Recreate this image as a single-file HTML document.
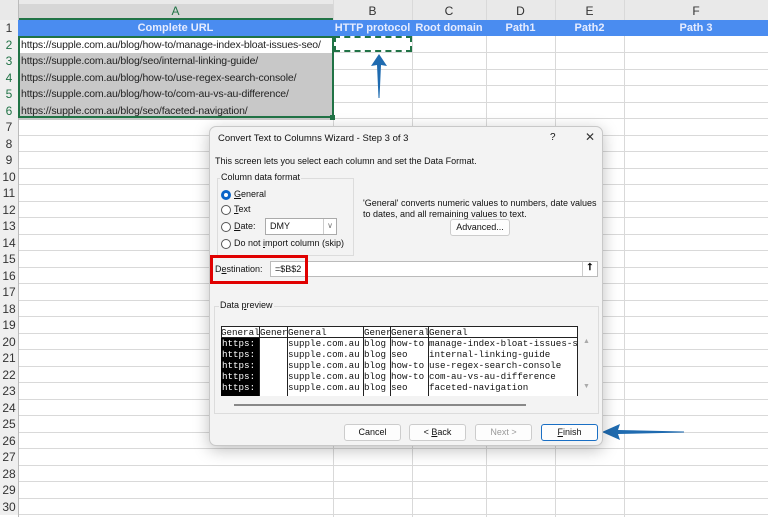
<!DOCTYPE html>
<html><head><style>
*{margin:0;padding:0;box-sizing:border-box}
body{width:768px;height:517px;overflow:hidden;background:#fff;font-family:"Liberation Sans",Arial,sans-serif;position:relative}
.a{position:absolute}
.hl{position:absolute;left:0;width:768px;height:1px;background:#d9d9d9}
.vl{position:absolute;top:0;height:517px;width:1px;background:#d9d9d9}
.rn{position:absolute;left:0;width:18px;text-align:center;font-size:12px;color:#333;height:16.5px;line-height:17px;background:#efefef}
.ch{position:absolute;top:4px;font-size:12px;color:#333;text-align:center}
.bh{position:absolute;top:20px;height:16px;line-height:16px;color:#e6ecff;font-weight:bold;font-size:11px;text-align:center;white-space:nowrap}
.url{position:absolute;left:19px;width:313px;font-size:10.5px;letter-spacing:-0.15px;color:#222;height:16.5px;line-height:17px;padding-left:2px;background:#c8c8c8;white-space:nowrap;overflow:hidden}
.dlg{position:absolute;left:209px;top:126px;width:394px;height:320px;background:#f3f3f3;border:1px solid #c8c8c8;border-radius:7px;box-shadow:0 4px 16px rgba(0,0,0,.25);font-size:9px;color:#111}
.btn{position:absolute;height:17px;background:#fdfdfd;border:1px solid #ccc;border-radius:3px;text-align:center;line-height:15px;font-size:9px}
.rad{position:absolute;width:10px;height:10px;border:1px solid #555;border-radius:50%;background:#fff}
.mono{font-family:"Liberation Mono",monospace;font-size:9.2px;position:absolute;line-height:11px;white-space:pre}
</style></head><body>
<div class="a" style="left:0;top:0;width:768px;height:20px;background:#e9e9e9"></div>
<div class="a" style="left:18px;top:4px;width:315px;height:16px;background:#d6d6d6;border-bottom:2px solid #217346"></div>
<div class="ch" style="left:18px;width:315px;color:#217346">A</div>
<div class="ch" style="left:333px;width:79px">B</div>
<div class="ch" style="left:412px;width:74px">C</div>
<div class="ch" style="left:486px;width:69px">D</div>
<div class="ch" style="left:555px;width:69px">E</div>
<div class="ch" style="left:624px;width:144px">F</div>
<div class="hl" style="top:52px"></div><div class="hl" style="top:69px"></div><div class="hl" style="top:85px"></div><div class="hl" style="top:102px"></div><div class="hl" style="top:118px"></div><div class="hl" style="top:135px"></div><div class="hl" style="top:151px"></div><div class="hl" style="top:168px"></div><div class="hl" style="top:184px"></div><div class="hl" style="top:201px"></div><div class="hl" style="top:217px"></div><div class="hl" style="top:234px"></div><div class="hl" style="top:250px"></div><div class="hl" style="top:267px"></div><div class="hl" style="top:283px"></div><div class="hl" style="top:300px"></div><div class="hl" style="top:316px"></div><div class="hl" style="top:333px"></div><div class="hl" style="top:349px"></div><div class="hl" style="top:366px"></div><div class="hl" style="top:382px"></div><div class="hl" style="top:399px"></div><div class="hl" style="top:415px"></div><div class="hl" style="top:432px"></div><div class="hl" style="top:448px"></div><div class="hl" style="top:465px"></div><div class="hl" style="top:481px"></div><div class="hl" style="top:498px"></div><div class="hl" style="top:514px"></div>
<div class="vl" style="left:18px;background:#bbb"></div><div class="vl" style="left:333px"></div><div class="vl" style="left:412px"></div><div class="vl" style="left:486px"></div><div class="vl" style="left:555px"></div><div class="vl" style="left:624px"></div>
<div class="a" style="left:18px;top:20px;width:750px;height:16px;background:#4a8cf0"></div>
<div class="bh" style="left:18px;width:315px">Complete URL</div>
<div class="bh" style="left:333px;width:79px">HTTP protocol</div>
<div class="bh" style="left:412px;width:74px">Root domain</div>
<div class="bh" style="left:486px;width:69px">Path1</div>
<div class="bh" style="left:555px;width:69px">Path2</div>
<div class="bh" style="left:624px;width:144px">Path 3</div>
<div class="url" style="top:37px;background:#fff">https://supple.com.au/blog/how-to/manage-index-bloat-issues-seo/</div>
<div class="url" style="top:53px">https://supple.com.au/blog/seo/internal-linking-guide/</div>
<div class="url" style="top:70px">https://supple.com.au/blog/how-to/use-regex-search-console/</div>
<div class="url" style="top:86px">https://supple.com.au/blog/how-to/com-au-vs-au-difference/</div>
<div class="url" style="top:103px">https://supple.com.au/blog/seo/faceted-navigation/</div>
<div class="a" style="left:18px;top:36px;width:316px;height:82px;border:2px solid #217346"></div>
<div class="a" style="left:330px;top:115px;width:5px;height:5px;background:#217346"></div>
<div class="a" style="left:334px;top:36px;width:78px;height:16px;border:2px dashed #217346"></div>
<div class="rn" style="top:20px">1</div><div class="rn" style="top:36.5px;color:#217346">2</div><div class="rn" style="top:53px;color:#217346">3</div><div class="rn" style="top:69.5px;color:#217346">4</div><div class="rn" style="top:86px;color:#217346">5</div><div class="rn" style="top:102.5px;color:#217346">6</div><div class="rn" style="top:119px">7</div><div class="rn" style="top:135.5px">8</div><div class="rn" style="top:152px">9</div><div class="rn" style="top:168.5px">10</div><div class="rn" style="top:185px">11</div><div class="rn" style="top:201.5px">12</div><div class="rn" style="top:218px">13</div><div class="rn" style="top:234.5px">14</div><div class="rn" style="top:251px">15</div><div class="rn" style="top:267.5px">16</div><div class="rn" style="top:284px">17</div><div class="rn" style="top:300.5px">18</div><div class="rn" style="top:317px">19</div><div class="rn" style="top:333.5px">20</div><div class="rn" style="top:350px">21</div><div class="rn" style="top:366.5px">22</div><div class="rn" style="top:383px">23</div><div class="rn" style="top:399.5px">24</div><div class="rn" style="top:416px">25</div><div class="rn" style="top:432.5px">26</div><div class="rn" style="top:449px">27</div><div class="rn" style="top:465.5px">28</div><div class="rn" style="top:482px">29</div><div class="rn" style="top:498.5px">30</div>
<svg class="a" style="left:368px;top:52px" width="22" height="48"><path d="M11 2 L19 14 L13 13 L11.5 46 L10.5 46 L9 13 L3 14 Z" fill="#1f6bb0"/></svg>
<svg class="a" style="left:600px;top:422px" width="86" height="20"><path d="M2 10 L20 2 L18 8 L84 9.5 L84 10.5 L18 12 L20 18 Z" fill="#1f6bb0"/></svg>
<div class="dlg">
<div class="a" style="left:8px;top:6px;font-size:9.5px">Convert Text to Columns Wizard - Step 3 of 3</div>
<div class="a" style="left:340px;top:5px;font-size:10px">?</div>
<div class="a" style="left:375px;top:3px;font-size:12px;color:#333">✕</div>
<div class="a" style="left:5px;top:29px">This screen lets you select each column and set the Data Format.</div>
<div class="a" style="left:7px;top:51px;width:137px;height:78px;border:1px solid #dcdcdc"></div>
<div class="a" style="left:10px;top:45px;background:#f3f3f3;padding:0 1px">Column data format</div>
<div class="rad" style="left:11px;top:63px;border:3px solid #0a64c8"></div><div class="a" style="left:24px;top:62px"><u>G</u>eneral</div>
<div class="rad" style="left:11px;top:78px"></div><div class="a" style="left:24px;top:77px"><u>T</u>ext</div>
<div class="rad" style="left:11px;top:95px"></div><div class="a" style="left:24px;top:94px"><u>D</u>ate:</div>
<div class="a" style="left:55px;top:91px;width:72px;height:17px;background:#fff;border:1px solid #aaa;padding:2px 4px">DMY</div>
<div class="a" style="left:113px;top:92px;width:13px;height:15px;border-left:1px solid #ccc;color:#777;font-size:8px;text-align:center;line-height:14px">∨</div>
<div class="rad" style="left:11px;top:112px"></div><div class="a" style="left:24px;top:111px">Do not <u>i</u>mport column (skip)</div>
<div class="a" style="left:153px;top:71px;line-height:10.5px;white-space:nowrap">'General' converts numeric values to numbers, date values<br>to dates, and all remaining values to text.</div>
<div class="btn" style="left:240px;top:92px;width:60px">Advanced...</div>
<div class="a" style="left:5px;top:137px">D<u>e</u>stination:</div>
<div class="a" style="left:60px;top:134px;width:328px;height:16px;background:#fff;border:1px solid #bbb;padding:2px 4px">=$B$2</div>
<div class="a" style="left:372px;top:135px;width:15px;height:14px;border-left:1px solid #ccc;text-align:center;font-size:10px;font-weight:bold">⭡</div>
<div class="a" style="left:0px;top:128px;width:98px;height:29px;border:3px solid #e00000"></div>
<div class="a" style="left:4px;top:179px;width:385px;height:108px;border:1px solid #dcdcdc"></div>
<div class="a" style="left:9px;top:173px;background:#f3f3f3;padding:0 1px">Data <u>p</u>review</div>
<div class="a" style="left:11px;top:199px;width:357px;height:70px;background:#fff;border-top:1px solid #222;border-left:1px solid #222;border-right:1px solid #222"></div>
<div class="a" style="left:11px;top:210px;width:357px;height:1px;background:#222"></div>
<div class="a" style="left:11px;top:211px;width:38px;height:58px;background:#000"></div>
<div class="a" style="left:49px;top:199px;width:1px;height:70px;background:#222"></div>
<div class="a" style="left:77px;top:199px;width:1px;height:70px;background:#222"></div>
<div class="a" style="left:153px;top:199px;width:1px;height:70px;background:#222"></div>
<div class="a" style="left:180px;top:199px;width:1px;height:70px;background:#222"></div>
<div class="a" style="left:218px;top:199px;width:1px;height:70px;background:#222"></div>
<div class="mono" style="left:11px;top:200px">General</div><div class="mono" style="left:50px;top:200px">Gener</div><div class="mono" style="left:78px;top:200px">General</div><div class="mono" style="left:154px;top:200px">Gener</div><div class="mono" style="left:181px;top:200px">General</div><div class="mono" style="left:219px;top:200px">General</div>
<div class="mono" style="left:12px;top:211px;color:#fff">https:
https:
https:
https:
https:</div>
<div class="mono" style="left:78px;top:211px">supple.com.au
supple.com.au
supple.com.au
supple.com.au
supple.com.au</div>
<div class="mono" style="left:154px;top:211px">blog
blog
blog
blog
blog</div>
<div class="mono" style="left:181px;top:211px">how-to
seo
how-to
how-to
seo</div>
<div class="mono" style="left:219px;top:211px;width:148px;overflow:hidden">manage-index-bloat-issues-seo
internal-linking-guide
use-regex-search-console
com-au-vs-au-difference
faceted-navigation</div>
<div class="a" style="left:373px;top:211px;font-size:7px;color:#aaa">▲</div>
<div class="a" style="left:373px;top:256px;font-size:7px;color:#aaa">▼</div>
<div class="a" style="left:24px;top:277px;width:292px;height:2px;background:#888"></div>
<div class="btn" style="left:134px;top:297px;width:57px">Cancel</div>
<div class="btn" style="left:199px;top:297px;width:57px">&lt; <u>B</u>ack</div>
<div class="btn" style="left:265px;top:297px;width:57px;color:#999">Next &gt;</div>
<div class="btn" style="left:331px;top:297px;width:57px;border:1px solid #1a6fc4"><u>F</u>inish</div>
</div>
</body></html>
